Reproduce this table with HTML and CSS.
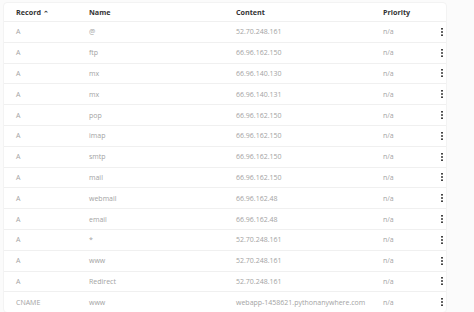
FILE: index.html
```html
<!DOCTYPE html>
<html lang="en">
<head>
  <meta charset="UTF-8">
  <title>DNS Records</title>
  <link rel="stylesheet" href="styles.css">
</head>
<body>
  <div class="records-card">
    <table class="records">
      <thead>
        <tr>
          <th class="col-type">Record <span class="sort">&#8963;</span></th>
          <th class="col-name">Name</th>
          <th class="col-content">Content</th>
          <th class="col-prio">Priority</th>
          <th class="col-menu"></th>
        </tr>
      </thead>
      <tbody id="rows"></tbody>
    </table>
  </div>

  <script>
    const records = [
      ['A', '@', '52.70.248.161'],
      ['A', 'ftp', '66.96.162.150'],
      ['A', 'mx', '66.96.140.130'],
      ['A', 'mx', '66.96.140.131'],
      ['A', 'pop', '66.96.162.150'],
      ['A', 'imap', '66.96.162.150'],
      ['A', 'smtp', '66.96.162.150'],
      ['A', 'mail', '66.96.162.150'],
      ['A', 'webmail', '66.96.162.48'],
      ['A', 'email', '66.96.162.48'],
      ['A', '*', '52.70.248.161'],
      ['A', 'www', '52.70.248.161'],
      ['A', 'Redirect', '52.70.248.161'],
      ['CNAME', 'www', 'webapp-1458621.pythonanywhere.com']
    ];

    const kebab = '<svg width="2" height="8" viewBox="0 0 2 8"><rect x="0" y="0" width="2" height="1.6"/><rect x="0" y="3.2" width="2" height="1.6"/><rect x="0" y="6.4" width="2" height="1.6"/></svg>';

    document.getElementById('rows').innerHTML = records.map(r => `
      <tr>
        <td>${r[0]}</td>
        <td>${r[1]}</td>
        <td>${r[2]}</td>
        <td>n/a</td>
        <td class="col-menu">${kebab}</td>
      </tr>`).join('');
  </script>
</body>
</html>
```

FILE: styles.css
```css
body {
  margin: 0;
  padding: 2px 27px 0 3px;
  background: #fbfbfb;
  font-family: "Open Sans", sans-serif;
}
.records-card {
  background: #fff;
  border: 1px solid #f3f3f3;
  border-radius: 4px;
  overflow: hidden;
}
.records {
  width: 100%;
  border-collapse: collapse;
  table-layout: fixed;
}
.records th {
  height: 18px;
  padding: 0 0 0 12px;
  text-align: left;
  font-size: 7.2px;
  font-weight: 700;
  color: #333;
  border-bottom: 1px solid #f0f0f0;
}
.records td {
  height: 19.8px;
  padding: 0 0 0 12px;
  font-size: 7px;
  font-weight: 400;
  color: #a3a3a3;
  border-bottom: 1px solid #f0f0f0;
  white-space: nowrap;
}
.records tbody tr:last-child td { border-bottom: none; }
.col-type { width: 61px; }
.col-name { width: 135px; }
.col-content { width: 135px; }
.col-prio { width: 58px; }
.records .col-menu {
  padding: 0;
  text-align: left;
}
.col-menu svg {
  display: block;
  fill: #444;
}
.sort {
  display: inline-block;
  font-size: 7px;
  transform: translateY(1px);
}
```
